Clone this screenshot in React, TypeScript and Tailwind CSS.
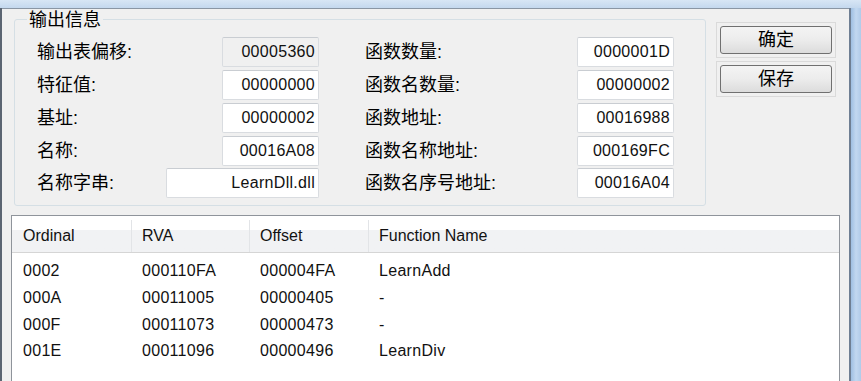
import React from "react";

const cjk = { fontFamily: '"Liberation Sans", "Noto Sans CJK SC", sans-serif' };

function Box({ value, w, gray }: { value: string; w: string; gray?: boolean }) {
  return (
    <div
      className={`${w} h-[30px] flex items-center justify-end pr-[3px] border border-[#d9dce0] border-t-[#c9cdd2] rounded-[2px] text-[16px] tracking-[0.3px] text-[#111] ${
        gray ? "bg-[#f0f0f0]" : "bg-white"
      }`}
    >
      {value}
    </div>
  );
}

function Row({ label, value, w, gray }: { label: string; value: string; w: string; gray?: boolean }) {
  return (
    <div className="flex items-center justify-between h-[30px]">
      <span className="text-[18px] text-black leading-none">{label}</span>
      <Box value={value} w={w} gray={gray} />
    </div>
  );
}

function Btn({ label }: { label: string }) {
  return (
    <div className="border border-[#dadada] p-[3px] w-[120px] h-[36px]">
      <div className="h-full rounded-[3px] border border-[#707070] bg-gradient-to-b from-[#f4f4f4] via-[#ececec] to-[#dcdcdc] flex items-center justify-center text-[18px] text-black leading-none">
        {label}
      </div>
    </div>
  );
}

const rows = [
  ["0002", "000110FA", "000004FA", "LearnAdd"],
  ["000A", "00011005", "00000405", "-"],
  ["000F", "00011073", "00000473", "-"],
  ["001E", "00011096", "00000496", "LearnDiv"],
];

export default function App() {
  return (
    <div className="w-[861px] h-[381px] overflow-hidden flex flex-col bg-[#bcd3ec]" style={cjk}>
      <div className="h-[8px] bg-gradient-to-b from-[#d8e6f5] to-[#c4d8ee]" />
      <div className="flex flex-1 min-h-0">
        <div className="w-[2px] bg-[#5b6572]" />
        <div className="w-[847px] bg-[#f0f0f0] border-t border-[#8a96a4] flex flex-col relative">
          <div className="flex pt-[10px] pl-[12px]">
            {/* group box */}
            <div className="relative w-[692px] h-[187px] border border-[#d5dfe5] rounded-[3px] pt-[17px] pl-[22px] flex">
              <span className="absolute left-[12px] top-[-11px] px-[2px] bg-[#f0f0f0] text-[18px] leading-[22px] text-black">
                输出信息
              </span>
              <div className="w-[282px] flex flex-col gap-[3px]">
                <Row label="输出表偏移:" value="00005360" w="w-[97px]" gray />
                <Row label="特征值:" value="00000000" w="w-[97px]" />
                <Row label="基址:" value="00000002" w="w-[97px]" />
                <Row label="名称:" value="00016A08" w="w-[97px]" />
                <div className="mt-[-1px]">
                  <Row label="名称字串:" value="LearnDll.dll" w="w-[153px]" />
                </div>
              </div>
              <div className="w-[309px] ml-[46px] flex flex-col gap-[3px]">
                <Row label="函数数量:" value="0000001D" w="w-[97px]" />
                <Row label="函数名数量:" value="00000002" w="w-[97px]" />
                <Row label="函数地址:" value="00016988" w="w-[97px]" />
                <Row label="函数名称地址:" value="000169FC" w="w-[97px]" />
                <div className="mt-[-1px]">
                  <Row label="函数名序号地址:" value="00016A04" w="w-[97px]" />
                </div>
              </div>
            </div>
            {/* buttons */}
            <div className="ml-[10px] mt-[3px] flex flex-col gap-[3px]">
              <Btn label="确定" />
              <Btn label="保存" />
            </div>
          </div>
          {/* list view */}
          <div className="ml-[9px] mt-[9px] w-[829px] flex-1 border border-b-0 border-[#8f949b] bg-white text-[16px] text-[#111]">
            <div className="h-[37px] pt-[4px] flex border-b border-[#d5d5d5] bg-gradient-to-b from-white from-40% to-[#f1f2f4] to-40%">
              <div className="w-[120px] pl-[11px] flex items-center border-r border-[#e2e4e7]">Ordinal</div>
              <div className="w-[118px] pl-[10px] flex items-center border-r border-[#e2e4e7]">RVA</div>
              <div className="w-[119px] pl-[10px] flex items-center border-r border-[#e2e4e7]">Offset</div>
              <div className="flex-1 pl-[10px] flex items-center">Function Name</div>
            </div>
            <div className="pt-[5px]">
              {rows.map((r) => (
                <div key={r[0]} className="h-[26.7px] flex items-center tracking-[0.3px]">
                  <div className="w-[120px] pl-[11px]">{r[0]}</div>
                  <div className="w-[118px] pl-[10px]">{r[1]}</div>
                  <div className="w-[119px] pl-[10px]">{r[2]}</div>
                  <div className="flex-1 pl-[10px]">{r[3]}</div>
                </div>
              ))}
            </div>
          </div>
        </div>
        <div className="w-[2px] bg-[#6f7f93]" />
        <div className="flex-1 bg-gradient-to-r from-[#9fbfe2] via-[#c2d8f0] to-[#b0cbe9]" />
      </div>
    </div>
  );
}
